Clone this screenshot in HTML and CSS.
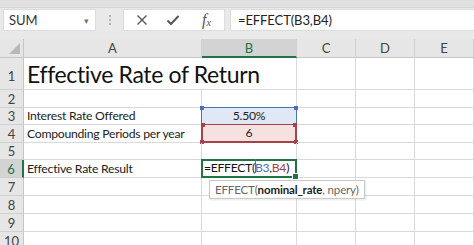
FILE: index.html
```html
<!DOCTYPE html>
<html lang="en">
<head>
  <meta charset="UTF-8">
  <title>Effective Rate of Return</title>
  <link rel="stylesheet" href="styles.css">
</head>
<body>
  <div class="top-strip"></div>

  <div class="formula-bar">
    <div class="name-box">
      <span>SUM</span>
      <span class="caret">&#9662;</span>
    </div>
    <div class="grip">
      <span></span><span></span><span></span>
    </div>
    <div class="fx-buttons">
      <svg class="btn-icon" width="12" height="12" viewBox="0 0 12 12">
        <path d="M1.5 1.5 L10.5 10.5 M10.5 1.5 L1.5 10.5" stroke="#555" stroke-width="1.4" fill="none"/>
      </svg>
      <svg class="btn-icon" width="14" height="12" viewBox="0 0 14 12">
        <path d="M1.5 6.5 L5 10 L12.5 2" stroke="#555" stroke-width="2" fill="none"/>
      </svg>
      <span class="fx">f<sub>x</sub></span>
    </div>
    <div class="formula-input">=EFFECT(B3,B4)</div>
  </div>

  <div class="sheet">
    <div class="corner"><span class="tri"></span></div>
    <div class="col-head">A</div>
    <div class="col-head active">B</div>
    <div class="col-head">C</div>
    <div class="col-head">D</div>
    <div class="col-head">E</div>

    <div class="row-head r1">1</div>
    <div class="cell title span2 r1">Effective Rate of Return</div>
    <div class="cell r1"></div>
    <div class="cell r1"></div>
    <div class="cell r1"></div>

    <div class="row-head">2</div>
    <div class="cell"></div>
    <div class="cell"></div>
    <div class="cell"></div>
    <div class="cell"></div>
    <div class="cell"></div>

    <div class="row-head">3</div>
    <div class="cell">Interest Rate Offered</div>
    <div class="cell num ref-blue">5.50%
      <i class="dot tl"></i><i class="dot tr"></i>
    </div>
    <div class="cell"></div>
    <div class="cell"></div>
    <div class="cell"></div>

    <div class="row-head">4</div>
    <div class="cell">Compounding Periods per year</div>
    <div class="cell num ref-red">6
      <i class="dot tl"></i><i class="dot tr"></i><i class="dot bl"></i><i class="dot br"></i>
    </div>
    <div class="cell"></div>
    <div class="cell"></div>
    <div class="cell"></div>

    <div class="row-head">5</div>
    <div class="cell"></div>
    <div class="cell"></div>
    <div class="cell"></div>
    <div class="cell"></div>
    <div class="cell"></div>

    <div class="row-head active">6</div>
    <div class="cell">Effective Rate Result</div>
    <div class="cell editing">=EFFECT(<span class="cursor"></span><span class="b3">B3</span>,<span class="b4">B4</span>)
      <i class="handle"></i>
      <div class="tooltip">EFFECT(<b>nominal_rate</b>, npery)</div>
    </div>
    <div class="cell"></div>
    <div class="cell"></div>
    <div class="cell"></div>

    <div class="row-head">7</div>
    <div class="cell"></div>
    <div class="cell"></div>
    <div class="cell"></div>
    <div class="cell"></div>
    <div class="cell"></div>

    <div class="row-head">8</div>
    <div class="cell"></div>
    <div class="cell"></div>
    <div class="cell"></div>
    <div class="cell"></div>
    <div class="cell"></div>

    <div class="row-head">9</div>
    <div class="cell"></div>
    <div class="cell"></div>
    <div class="cell"></div>
    <div class="cell"></div>
    <div class="cell"></div>

    <div class="row-head">10</div>
    <div class="cell"></div>
    <div class="cell"></div>
    <div class="cell"></div>
    <div class="cell"></div>
    <div class="cell"></div>
  </div>
</body>
</html>
```

FILE: styles.css
```css
:root {
  --grid: #d9d9d9;
  --head-bg: #e6e6e6;
  --head-line: #c6c6c6;
  --green: #217346;
}

body {
  margin: 0;
  width: 474px;
  height: 245px;
  overflow: hidden;
  background: #e9e9e9;
  font-family: Lato, 'Liberation Sans', sans-serif;
  color: #222;
}

.top-strip {
  height: 7px;
  background: #e1e1e1;
  border-bottom: 1px solid #d6d6d6;
}

.formula-bar {
  display: flex;
  align-items: stretch;
  height: 22px;
  padding: 1px 0 0 3px;
  margin-bottom: 8px;
}

.name-box {
  width: 93px;
  background: #fff;
  border: 1px solid #dcdcdc;
  display: flex;
  align-items: center;
  justify-content: space-between;
  padding: 0 6px 0 5px;
  box-sizing: border-box;
  font-size: 13px;
  color: #333;
}

.caret {
  font-size: 9px;
  color: #777;
}

.grip {
  width: 27px;
  display: flex;
  flex-direction: column;
  align-items: center;
  justify-content: center;
  gap: 2px;
}

.grip span {
  width: 2px;
  height: 2px;
  background: #b5b5b5;
}

.fx-buttons {
  width: 102px;
  background: #fff;
  border: 1px solid #dcdcdc;
  box-sizing: border-box;
  display: flex;
  align-items: center;
  padding-left: 12px;
  gap: 18px;
}

.fx {
  font-family: 'Liberation Serif', serif;
  font-style: italic;
  font-size: 16px;
  color: #555;
  margin-left: 4px;
}

.fx sub {
  font-size: 10px;
  vertical-align: -1px;
}

.formula-input {
  flex: 1;
  margin-left: 5px;
  background: #fff;
  border: 1px solid #dcdcdc;
  border-right: none;
  padding-left: 7px;
  font-size: 13px;
  letter-spacing: -0.1px;
  line-height: 20px;
  color: #222;
}

.sheet {
  display: grid;
  grid-template-columns: 24px 178px 95px 59px 59px 1fr;
  grid-template-rows: 19px 32px 18px 17px 18px 17px 18px 18px 18px 18px 18px;
  background: #fff;
}

.corner {
  background: var(--head-bg);
  border-right: 1px solid var(--head-line);
  border-bottom: 1px solid var(--head-line);
  position: relative;
}

.tri {
  position: absolute;
  right: 3px;
  bottom: 3px;
  width: 0;
  height: 0;
  border-left: 11px solid transparent;
  border-bottom: 11px solid #b8b8b8;
}

.col-head {
  background: var(--head-bg);
  border-right: 1px solid #d0d0d0;
  border-bottom: 1px solid var(--head-line);
  text-align: center;
  font-size: 13px;
  line-height: 19px;
  color: #444;
}

.col-head.active {
  background: #d3d3d3;
  color: var(--green);
  border-bottom: 2px solid var(--green);
  line-height: 18px;
}

.row-head {
  background: var(--head-bg);
  border-right: 1px solid var(--head-line);
  border-bottom: 1px solid #d0d0d0;
  text-align: center;
  font-size: 13px;
  display: flex;
  align-items: center;
  justify-content: center;
  color: #444;
}

.row-head.r1 {
  align-items: flex-end;
  padding-bottom: 5px;
}

.row-head.active {
  background: #d3d3d3;
  color: var(--green);
  border-right: 2px solid var(--green);
}

.cell {
  position: relative;
  border-right: 1px solid var(--grid);
  border-bottom: 1px solid var(--grid);
  font-size: 12.2px;
  letter-spacing: -0.25px;
  padding-left: 3px;
  display: flex;
  align-items: flex-end;
  padding-bottom: 1px;
  white-space: nowrap;
  color: #222;
}

.span2 {
  grid-column: span 2;
}

.title {
  font-size: 23px;
  letter-spacing: -0.35px;
  padding-bottom: 1px;
  color: #111;
}

.num {
  justify-content: center;
  padding-left: 0;
}

.ref-blue {
  background: #dfe8f4;
  border: 1px solid #4a72b0;
  margin: -1px 0 0 -1px;
}

.ref-red {
  background: #f6e1e1;
  border: 2px solid #a7424d;
  border-top-width: 1px;
  margin: -1px 0 0 -1px;
}

.dot {
  position: absolute;
  width: 4px;
  height: 4px;
}

.ref-blue .dot { background: #4a72b0; }
.ref-red .dot { background: #a7424d; }

.dot.tl { left: -2px; top: -2px; }
.dot.tr { right: -2px; top: -2px; }
.dot.bl { left: -3px; bottom: -3px; }
.dot.br { right: -3px; bottom: -3px; }

.editing {
  border: 2px solid var(--green);
  margin: -1px 0 0 -1px;
  padding-left: 1px;
  z-index: 2;
  overflow: visible;
  font-size: 12.2px;
  letter-spacing: -0.3px;
  color: #111;
}

.b3 { color: #4a72b0; }
.b4 { color: #a7424d; }

.cursor {
  display: inline-block;
  width: 1px;
  height: 14px;
  background: #4a72b0;
  margin: 0 -1px 2px 0;
  align-self: flex-end;
}

.handle {
  position: absolute;
  right: -4px;
  bottom: -4px;
  width: 5px;
  height: 5px;
  background: var(--green);
  border: 1px solid #fff;
}

.tooltip {
  position: absolute;
  left: 6px;
  top: 19px;
  background: #fff;
  border: 1px solid #c8c8c8;
  box-shadow: 1px 1px 2px rgba(0, 0, 0, 0.1);
  font-size: 11.5px;
  letter-spacing: -0.15px;
  line-height: 17px;
  padding: 0 5px;
  color: #666;
  white-space: nowrap;
}

.tooltip b {
  color: #222;
}
```
